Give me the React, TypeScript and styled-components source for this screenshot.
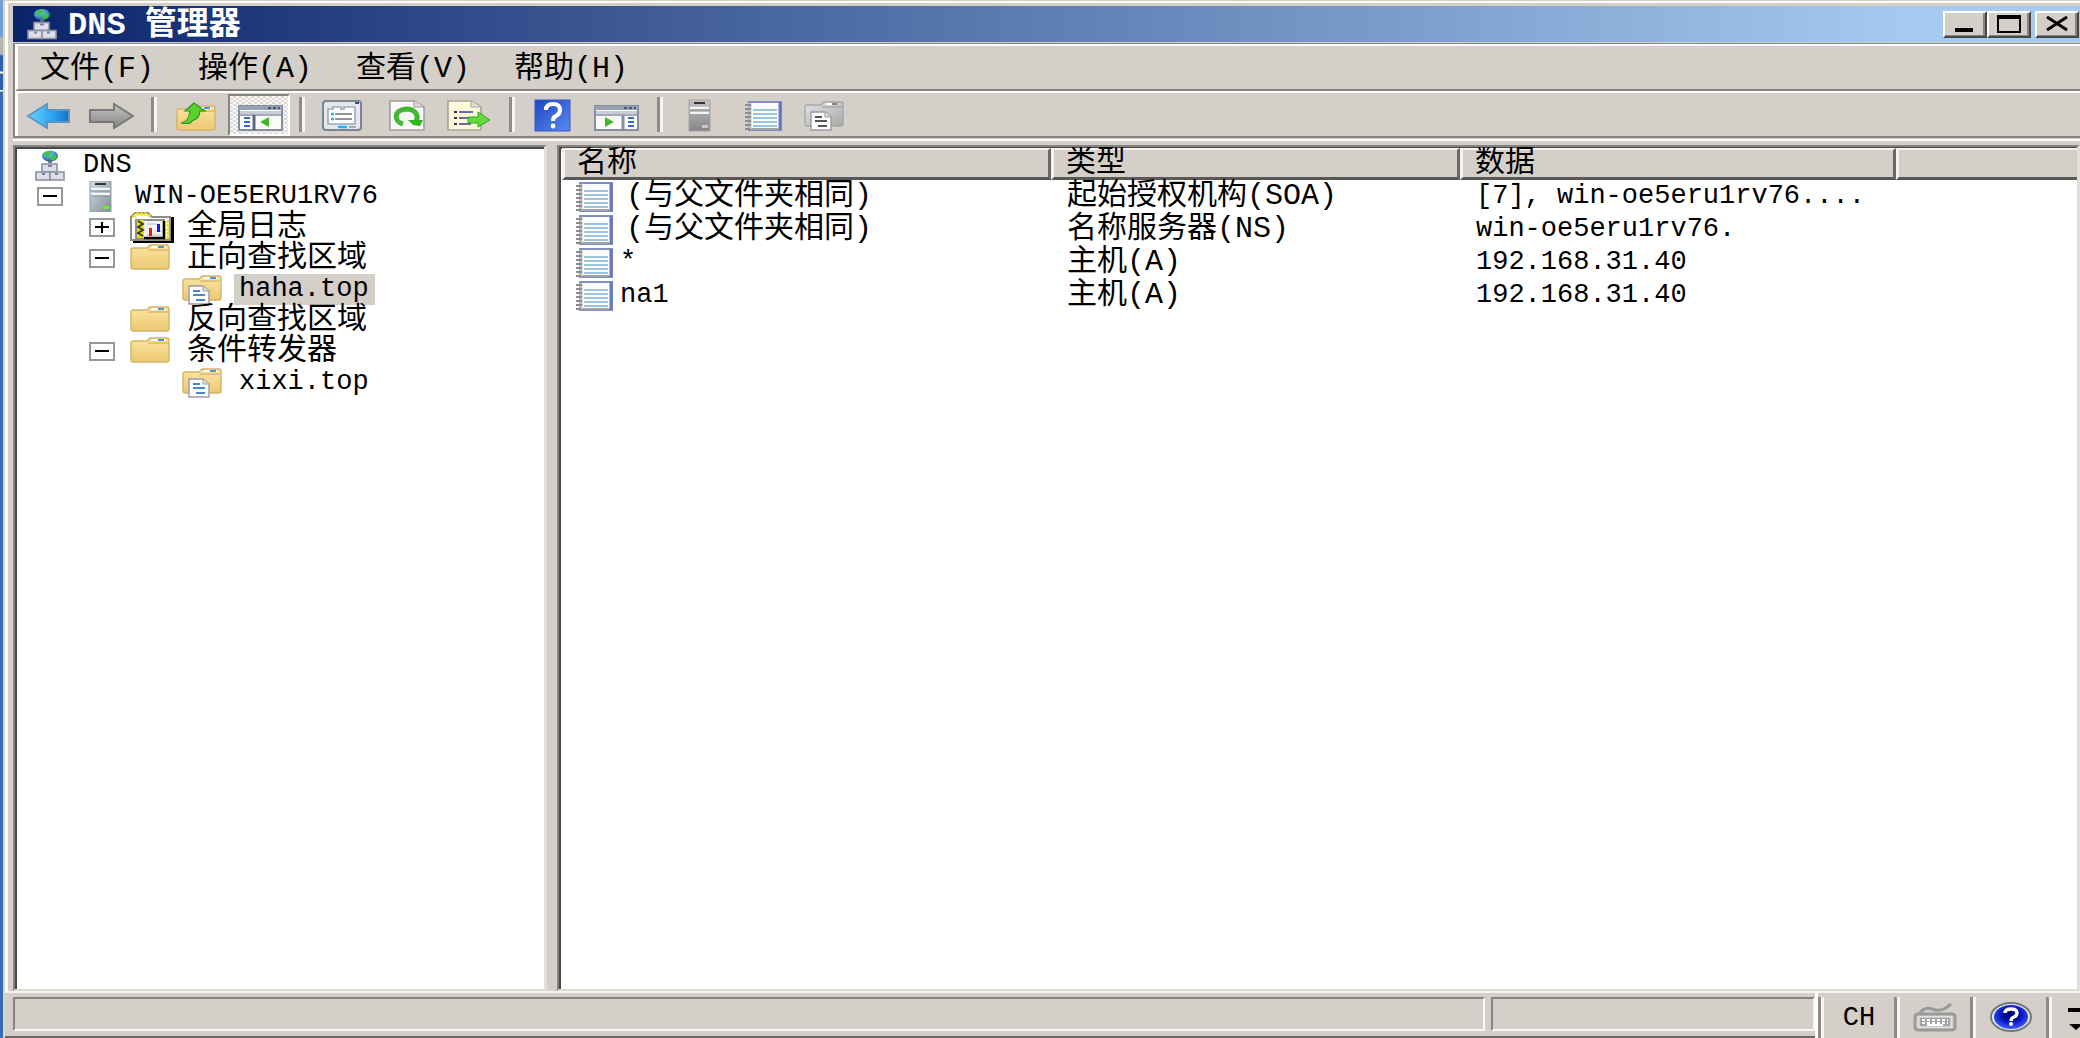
import React, { useState } from 'react';
import styled, { createGlobalStyle, css } from 'styled-components';

const face = '#d4cfc8';
const shade = '#868480';
const dark = '#484848';
const light = '#ffffff';
const font = '"Liberation Mono", "Noto Sans CJK SC", monospace';

const Global = createGlobalStyle`
  * { box-sizing: border-box; }
  body { margin: 0; overflow: hidden; background: ${face}; color: #000; font-family: ${font}; }
  button { font: inherit; color: inherit; border: 0; padding: 0; margin: 0; background: none; }
  svg { display: block; flex: none; }
`;

const Desktop = styled.div`
  display: flex;
  flex-direction: column;
  height: 100vh;
  padding-left: 3px;
  background: linear-gradient(#6fa0d8 0 36px, #b4b4b0 38px 54px, #2d62a8 56px 71px, #fff 72px 73px, #2d62a8 74px 90px, #fff 90px 91px, #3a6cae 92px);
`;

const Frame = styled.div`
  flex: 1;
  min-height: 0;
  display: flex;
  flex-direction: column;
  padding: 3px 0 0 5px;
  background: ${face};
  border-left: 2px solid #d8d4ca;
  border-top: 1px solid ${face};
  box-shadow: inset 3px 2px 0 #fbfbf8;
`;

const Inner = styled.div`
  flex: 1;
  min-height: 0;
  display: flex;
  flex-direction: column;
  padding-left: 3px;
`;

const TitleBar = styled.header`
  display: flex;
  align-items: center;
  flex: none;
  height: 38px;
  padding: 0 1px 0 13px;
  margin-bottom: 1px;
  background: linear-gradient(to right, #0a246a, #a6caf0 92%);
  border-top: 2px solid ${face};
`;

const Title = styled.h1`
  flex: 1;
  margin: 0 0 0 10px;
  padding-top: 4px;
  font-size: 32px;
  line-height: 32px;
  font-weight: 700;
  color: #fff;
`;

const WindowButton = styled.button<{ $apart?: boolean }>`
  display: flex;
  align-items: center;
  justify-content: center;
  width: 44px;
  height: 27px;
  margin-left: ${(p) => (p.$apart ? 4 : 0)}px;
  background: ${face};
  border: 2px solid;
  border-color: ${light} ${dark} ${dark} ${light};
  box-shadow: inset -2px -1px 0 ${shade};
`;

const Rebar = styled.div`
  flex: none;
  border: solid ${shade};
  border-width: 1px 0 2px 2px;
  margin-bottom: 1px;
`;

const Band = styled.div<{ $divided?: boolean }>`
  display: flex;
  align-items: center;
  height: ${(p) => (p.$divided ? 47 : 45)}px;
  border-top: 2px solid ${light};
  border-left: 3px solid ${light};
  ${(p) => p.$divided && css`border-bottom: 2px solid ${shade};`}
`;

const MenuItem = styled.button`
  padding: 3px 22px 0;
  font-size: 30px;
  line-height: 40px;
`;

const Tool = styled.button<{ $pressed?: boolean }>`
  display: flex;
  align-items: center;
  justify-content: center;
  width: 62px;
  height: 42px;
  ${(p) =>
    p.$pressed &&
    css`
      border: 2px solid;
      border-color: ${shade} ${light} ${light} ${shade};
      background: repeating-conic-gradient(#dedad5 0 25%, #f8f7f5 0 50%) 0 0 / 6px 4px;
    `}
`;

const Etch = styled.span<{ $tall?: boolean; $space: number }>`
  flex: none;
  width: 6px;
  height: ${(p) => (p.$tall ? '42px' : '35px')};
  margin: 0 ${(p) => p.$space}px;
  border-left: 3px solid #8e8c88;
  border-right: 3px solid #f6f5f2;
`;

const Panes = styled.main`
  flex: 1;
  min-height: 0;
  display: grid;
  grid-template-columns: 534px minmax(0, 1fr);
  gap: 10px;
  padding-top: 4px;
  border-top: 2px solid ${light};
`;

const Pane = styled.section`
  min-width: 0;
  background: #fff;
  border: solid;
  border-width: 2px 3px 2px 2px;
  border-color: ${shade} #e2dfd8 #dcdacf ${shade};
  box-shadow: inset 2px 2px 0 ${dark};
  padding: 1px 0 0 3px;
  overflow: hidden;
`;

const Tree = styled.ul`
  list-style: none;
  margin: 0;
  padding: 2px 0 0;
`;

const Node = styled.li<{ $level: number }>`
  display: flex;
  align-items: center;
  height: 31px;
  padding-left: ${(p) => Math.max(0, p.$level - 1) * 52 + 8}px;
`;

const Slot = styled.span`
  display: flex;
  width: 52px;
  flex: none;
`;

const Expander = styled.button`
  margin-left: 11px;
  width: 26px;
  height: 19px;
`;

const NodeLabel = styled.button<{ $selected?: boolean; $latin?: boolean }>`
  height: 31px;
  padding: 0 6px 0 5px;
  font-size: ${(p) => (p.$latin ? 27 : 30)}px;
  line-height: 31px;
  white-space: nowrap;
  background: ${(p) => (p.$selected ? face : 'transparent')};
`;

const Records = styled.table`
  width: 100%;
  table-layout: fixed;
  border-collapse: separate;
  border-spacing: 0;
`;

const Head = styled.th<{ $open?: boolean }>`
  height: 32px;
  padding: 0 0 0 12px;
  background: ${face};
  text-align: left;
  font-weight: 400;
  font-size: 30px;
  line-height: 27px;
  border-top: 2px solid #f4f3f0;
  border-left: 3px solid #f4f3f0;
  border-bottom: 3px solid #5a5855;
  border-right: ${(p) => (p.$open ? '0' : `3px solid #6a6864`)};
`;

const Cell = styled.td`
  height: 33px;
  padding: 0 0 0 16px;
  font-size: 30px;
  line-height: 33px;
  white-space: nowrap;
`;

const DataCell = styled(Cell)`
  font-size: 27px;
`;

const NameCell = styled(Cell)<{ $latin?: boolean }>`
  padding-left: 13px;
  font-size: ${(p) => (p.$latin ? 27 : 30)}px;
`;

const Name = styled.span<{ $latin?: boolean }>`
  display: flex;
  align-items: center;
  gap: ${(p) => (p.$latin ? 6 : 12)}px;
`;

const Footer = styled.footer`
  flex: none;
  display: flex;
  height: 47px;
  margin-left: -8px;
  border-top: 2px solid #f6f5f2;
`;

const Status = styled.div`
  flex: 1;
  display: grid;
  grid-template-columns: minmax(0, 1471fr) minmax(0, 324fr);
  gap: 6px;
  padding: 4px 0 5px 8px;
  background: ${face};
  border-bottom: 2px solid #6a6966;
`;

const StatusPanel = styled.div`
  border: 2px solid;
  border-color: ${shade} #f8f7f4 #f8f7f4 ${shade};
`;

const LanguageBar = styled.div`
  flex: none;
  display: flex;
  align-items: center;
  width: 265px;
  padding-top: 4px;
  background: ${face};
  border-left: 3px solid ${light};
  overflow: hidden;
`;

const LanguageButton = styled.button`
  display: flex;
  align-items: center;
  justify-content: center;
  flex: none;
  width: 70px;
  height: 40px;
  font-size: 27px;
`;

const MoreButton = styled(LanguageButton)`
  width: 31px;
  justify-content: flex-end;
`;

const Defs = () => (
  <svg width="0" height="0" aria-hidden="true" style={{ position: 'absolute' }}>
    <defs>
      <linearGradient id="gold" x1="0" y1="0" x2="0" y2="1">
        <stop offset="0" stopColor="#fbe6a0" />
        <stop offset="1" stopColor="#ecc873" />
      </linearGradient>
      <linearGradient id="silver" x1="0" y1="0" x2="1" y2="1">
        <stop offset="0" stopColor="#e4e4e4" />
        <stop offset="1" stopColor="#a8a8a8" />
      </linearGradient>
      <linearGradient id="steel" x1="0" y1="0" x2="1" y2="1">
        <stop offset="0" stopColor="#d4dce0" />
        <stop offset="1" stopColor="#7f8f98" />
      </linearGradient>
      <linearGradient id="iron" x1="0" y1="0" x2="0" y2="1">
        <stop offset="0" stopColor="#c4c4c4" />
        <stop offset="1" stopColor="#858585" />
      </linearGradient>
      <linearGradient id="azure" x1="0" y1="0" x2="1" y2="0">
        <stop offset="0" stopColor="#6fd0ff" />
        <stop offset="0.6" stopColor="#2aa4f0" />
        <stop offset="1" stopColor="#1672c0" />
      </linearGradient>
      <linearGradient id="royal" x1="0" y1="0" x2="1" y2="1">
        <stop offset="0" stopColor="#1c46c4" />
        <stop offset="1" stopColor="#5c8af0" />
      </linearGradient>
      <radialGradient id="globe" cx="0.4" cy="0.3" r="0.8">
        <stop offset="0" stopColor="#7fd8ff" />
        <stop offset="1" stopColor="#124c9c" />
      </radialGradient>
      <radialGradient id="orb" cx="0.5" cy="0.4" r="0.6">
        <stop offset="0" stopColor="#00006a" />
        <stop offset="0.5" stopColor="#0812b8" />
        <stop offset="1" stopColor="#3a5cff" />
      </radialGradient>
    </defs>
  </svg>
);

const DnsArt = () => (
  <g>
    <ellipse cx="24" cy="6" rx="8" ry="5.5" fill="url(#globe)" />
    <path d="M18 3l5-2 3 2-3 3-4 1zM25 6l5-1 1 3-4 3-3-2z" fill="#3cc43c" />
    <path d="M22 11h4v2h-4z" fill="#777" />
    <g fill="#dcdee8" stroke="#9092a0" strokeWidth="1.6">
      <rect x="16" y="14" width="15" height="8" />
      <rect x="10" y="22" width="14" height="8" />
      <rect x="24" y="22" width="14" height="8" />
    </g>
    <path d="M22 16h4M16 24h3M29 24h3" stroke="#7a80a0" strokeWidth="2" />
  </g>
);

const ServerArt = ({ gray }: { gray?: boolean }) => (
  <g>
    <path d="M12 0h21v31H12z" fill={gray ? 'url(#iron)' : 'url(#steel)'} stroke={gray ? '#a4a4a4' : '#93a2aa'} />
    <path d="M17 3h11" stroke="#333" strokeWidth="2" />
    <path d="M13 8h19M13 13h19" stroke="#f2f4f5" strokeWidth="2.4" />
    <path d="M13 10h19M13 15h19" stroke="#8c9498" strokeWidth="1" />
    <path d="M25 25h6v3h-6z" fill={gray ? '#c8c8c8' : '#6ff020'} />
  </g>
);

const FolderArt = ({ gray, page }: { gray?: boolean; page?: boolean }) => (
  <g>
    <path
      d="M1 6q0-2 2-2h14l3-3h17q2 0 2 2v20q0 2-2 2H3q-2 0-2-2z"
      fill={gray ? 'url(#silver)' : 'url(#gold)'}
      stroke={gray ? '#a8a8a8' : '#d4b468'}
      strokeWidth="1.4"
    />
    <path d="M18 6h20" stroke={gray ? '#aaa' : '#dcb868'} strokeWidth="1.4" />
    <path d="M22 3h13" stroke="#fff" strokeWidth="2" />
    <path d="M28 3h6" stroke={gray ? '#888' : '#4c94d8'} strokeWidth="2" />
    {page && (
      <>
        <path d="M7 11h14l6 5v13H7z" fill="#fff" stroke="#9a9ca0" strokeWidth="1.4" />
        <path d="M21 11v5h6" fill="#ddd" stroke="#9a9ca0" />
        <path d="M11 16h7M11 20h12M14 25h9" stroke={gray ? '#555' : '#4488d0'} strokeWidth="2" />
      </>
    )}
  </g>
);

const LogArt = () => (
  <g>
    <path d="M3 31h41V5h-3v22H3z" fill="#000" />
    <path d="M1 28V5l4-4h13l4 4h18v23z" fill="#fff" stroke="#8c8c8c" strokeWidth="2" />
    <path d="M3 5l4-3h10l4 3M38 8v19" fill="none" stroke="#f0e020" strokeWidth="3" strokeDasharray="3 1" />
    <path d="M6 8h28v18H6z" fill="#f4f4f4" stroke="#909090" strokeWidth="2" />
    <path d="M34 9v17H14" fill="none" stroke="#000" strokeWidth="2.6" />
    <path d="M7 8h7v18H7z" fill="#e8e000" />
    <path d="M8 9l5 3-5 3 5 3-5 3 5 3" fill="none" stroke="#333" strokeWidth="1.8" />
    <path d="M17 12h10M17 23h14M26 19h6" stroke="#bbb" />
    <path d="M19 16h3v8h-3z" fill="#f01818" />
    <path d="M27 12h3v8h-3z" fill="#1818f0" />
  </g>
);

const NotebookArt = () => (
  <g>
    <path d="M5 1h32v28H5z" fill="#fdfdfd" stroke="#8090c4" strokeWidth="2" />
    <path d="M36 1v28" stroke="#6478bc" strokeWidth="3" />
    <path d="M6 28h28" stroke="#a4a4a4" strokeWidth="2" />
    <path d="M6 2v26" stroke="#c4c4c4" strokeWidth="3" />
    <path d="M9 9h24M9 13h24M9 17h24M9 21h24M9 25h24" stroke="#9cc4dc" strokeWidth="2" />
    <path d="M1 4h6M1 8h6M1 12h6M1 16h6M1 20h6M1 24h6M1 28h5" stroke="#8c8c8c" strokeWidth="1.8" />
  </g>
);

const WindowArt = ({ mirrored }: { mirrored?: boolean }) => (
  <g>
    <path d="M1 1h43v24H1z" fill="#fbfbfb" stroke="#8490a0" strokeWidth="2" />
    <path d="M1 1h43v4H1z" fill="#98a2b2" />
    <path d="M2 6h41v3H2z" fill="#c8ced8" />
    <path d="M30 3h3M35 3h3M40 3h2" stroke="#4a5468" strokeWidth="2" />
    <path d="M1 10h43" stroke="#8490a0" strokeWidth="1.6" />
    {mirrored ? (
      <>
        <path d="M29 10v15" stroke="#8490a0" strokeWidth="3" />
        <path d="M34 13h6M34 17h6M34 21h6" stroke="#3a6cc0" strokeWidth="2" />
        <path d="M11 12v10l9-5z" fill="#42b828" />
      </>
    ) : (
      <>
        <path d="M16 10v15" stroke="#5a6884" strokeWidth="3" />
        <path d="M6 13h6M6 17h6M6 21h6" stroke="#3a6cc0" strokeWidth="2" />
        <path d="M31 12v10l-9-5z" fill="#42b828" />
      </>
    )}
  </g>
);

const toolArt: Record<string, React.ReactNode> = {
  back: <path d="M3 18L22 6v6h22v12H22v6z" fill="url(#azure)" stroke="#5a98c4" strokeWidth="2" />,
  forward: <path d="M46 18L27 6v6H3v12h24v6z" fill="url(#iron)" stroke="#787878" strokeWidth="2" />,
  up: (
    <>
      <g transform="translate(3 7)"><FolderArt /></g>
      <path d="M8 25c6-1 8-5 9-12h-5l9-8 11 8h-5c-1 9-5 8-8 10-1 3-5 3-11 2z" fill="#5cd030" stroke="#2c9420" strokeWidth="1.2" />
    </>
  ),
  tree: <g transform="translate(3 7)"><WindowArt /></g>,
  properties: (
    <>
      <rect x="2" y="3" width="38" height="29" rx="3" fill="#e4e8ee" stroke="#7c8494" strokeWidth="2" />
      <path d="M34 5h4" stroke="#3c4c7c" strokeWidth="2" />
      <path d="M7 11h5V9h8v2h3V9h11v17H7z" fill="#fff" stroke="#a0a6b8" strokeWidth="1.6" />
      <path d="M14 16h17M14 21h17" stroke="#949494" strokeWidth="1.8" />
      <path d="M10 16h3M10 21h3M17 29h9" stroke="#18b8ec" strokeWidth="2.4" />
      <path d="M28 29h7" stroke="#aaa" strokeWidth="2" />
    </>
  ),
  refresh: (
    <>
      <path d="M7 3h24l10 6v23H7z" fill="#fafafa" stroke="#a0a0a0" strokeWidth="1.6" />
      <path d="M31 3v6h10" fill="#ddd" stroke="#989898" />
      <path d="M20 26c-10-3-9-14 3-15 10 0 13 7 10 12" fill="none" stroke="#44b834" strokeWidth="5" />
      <path d="M25 22h15l-3 6-7-1z" fill="#30b420" />
    </>
  ),
  export: (
    <>
      <path d="M3 3h23l10 6v23H3z" fill="#fdf7dc" stroke="#aaa494" strokeWidth="1.6" />
      <path d="M26 3v6h10" fill="#ddd" stroke="#aaa494" />
      <path d="M9 14h3M9 20h3M9 26h3" stroke="#333" strokeWidth="2" />
      <path d="M14 14h14M14 20h10M14 26h12" stroke="#7468a0" strokeWidth="2" />
      <path d="M23 19h10v-5l12 8-12 7v-4H23z" fill="#64d83c" stroke="#38a424" />
    </>
  ),
  help: (
    <>
      <rect x="4" y="2" width="35" height="31" fill="url(#royal)" stroke="#3a58b8" />
      <path d="M15 12q0-6 7-6t7 6q0 4-4 6-3 1-3 5" fill="none" stroke="#fff" strokeWidth="4" />
      <circle cx="22" cy="28" r="2.4" fill="#fff" />
    </>
  ),
  action: <g transform="translate(1 7)"><WindowArt mirrored /></g>,
  server: <g transform="translate(-2 2)"><ServerArt gray /></g>,
  record: <g transform="translate(3 3)"><NotebookArt /></g>,
  zone: <g transform="translate(1 3)"><FolderArt gray page /></g>,
};

const tools: [string, string][] = [
  ['back', '后退'],
  ['forward', '前进'],
  ['-', ''],
  ['up', '向上'],
  ['tree', '显示控制台树'],
  ['-', ''],
  ['properties', '属性'],
  ['refresh', '刷新'],
  ['export', '导出列表'],
  ['-', ''],
  ['help', '帮助'],
  ['action', '显示操作窗格'],
  ['-', ''],
  ['server', '新建服务器'],
  ['record', '新建记录'],
  ['zone', '新建区域'],
];

type Item = { id: string; parents: string[]; level: number; label: string; art: React.ReactNode; expandable?: boolean; latin?: boolean; top?: number };

const items: Item[] = [
  { id: 'dns', parents: [], level: 0, label: 'DNS', art: <DnsArt />, latin: true },
  { id: 'host', parents: [], level: 1, label: 'WIN-OE5ERU1RV76', art: <ServerArt />, expandable: true, latin: true },
  { id: 'log', parents: ['host'], level: 2, label: '全局日志', art: <LogArt />, expandable: true },
  { id: 'fwd', parents: ['host'], level: 2, label: '正向查找区域', art: <FolderArt />, expandable: true, top: 1 },
  { id: 'haha', parents: ['host', 'fwd'], level: 3, label: 'haha.top', art: <FolderArt page />, latin: true, top: 1 },
  { id: 'rev', parents: ['host'], level: 2, label: '反向查找区域', art: <FolderArt />, top: 1 },
  { id: 'cond', parents: ['host'], level: 2, label: '条件转发器', art: <FolderArt />, expandable: true, top: 1 },
  { id: 'xixi', parents: ['host', 'cond'], level: 3, label: 'xixi.top', art: <FolderArt page />, latin: true, top: 1 },
];

const records = [
  { name: '(与父文件夹相同)', type: '起始授权机构(SOA)', data: '[7], win-oe5eru1rv76....' },
  { name: '(与父文件夹相同)', type: '名称服务器(NS)', data: 'win-oe5eru1rv76.' },
  { name: '*', type: '主机(A)', data: '192.168.31.40', latin: true },
  { name: 'na1', type: '主机(A)', data: '192.168.31.40', latin: true },
];

export default function App() {
  const [open, setOpen] = useState<string[]>(['host', 'fwd', 'cond']);
  const [selected, setSelected] = useState('haha');
  const toggle = (id: string) => setOpen((o) => (o.includes(id) ? o.filter((x) => x !== id) : [...o, id]));

  return (
    <Desktop>
      <Global />
      <Defs />
      <Frame>
        <Inner>
          <TitleBar>
            <svg width="32" height="32" viewBox="8 0 32 31"><DnsArt /></svg>
            <Title>DNS 管理器</Title>
            <WindowButton aria-label="最小化">
              <svg width="30" height="18"><path d="M5 15h18" stroke="#000" strokeWidth="4" /></svg>
            </WindowButton>
            <WindowButton aria-label="最大化">
              <svg width="30" height="20"><path d="M4 3h22v15H4z" fill="none" stroke="#000" strokeWidth="2" /><path d="M3 3h24" stroke="#000" strokeWidth="4" /></svg>
            </WindowButton>
            <WindowButton aria-label="关闭" $apart>
              <svg width="26" height="18"><path d="M3 2l20 13M23 2L3 15" stroke="#000" strokeWidth="3" /></svg>
            </WindowButton>
          </TitleBar>
          <Rebar>
            <Band as="nav" $divided>
              {['文件(F)', '操作(A)', '查看(V)', '帮助(H)'].map((m) => (
                <MenuItem key={m}>{m}</MenuItem>
              ))}
            </Band>
            <Band role="toolbar">
              {tools.map(([id, label], i) =>
                id === '-' ? (
                  <Etch key={i} $space={9} />
                ) : (
                  <Tool key={id} aria-label={label} $pressed={id === 'tree'}>
                    <svg width="48" height="34" viewBox="0 0 48 34">{toolArt[id]}</svg>
                  </Tool>
                ),
              )}
            </Band>
          </Rebar>
          <Panes>
            <Pane>
              <Tree role="tree">
                {items
                  .filter((n) => n.parents.every((p) => open.includes(p)))
                  .map((n) => (
                    <Node key={n.id} $level={n.level} role="treeitem">
                      {n.level > 0 && (
                        <Slot>
                          {n.expandable && (
                            <Expander aria-label={n.label} onClick={() => toggle(n.id)}>
                              <svg width="26" height="19">
                                <path d="M1 1h24v17H1z" fill="#fff" stroke="#989898" strokeWidth="2" />
                                <path d={open.includes(n.id) ? 'M6 9h14' : 'M6 9h14M13 4v11'} stroke="#000" strokeWidth="2" />
                              </svg>
                            </Expander>
                          )}
                        </Slot>
                      )}
                      <Slot>
                        <svg width="45" height="31" viewBox={`0 ${-(n.top ?? 0)} 45 31`}>{n.art}</svg>
                      </Slot>
                      <NodeLabel $latin={n.latin} $selected={selected === n.id} onClick={() => setSelected(n.id)}>
                        {n.label}
                      </NodeLabel>
                    </Node>
                  ))}
              </Tree>
            </Pane>
            <Pane>
              <Records>
                <colgroup>
                  <col width="489" />
                  <col width="409" />
                  <col width="436" />
                  <col />
                </colgroup>
                <thead>
                  <tr>
                    <Head>名称</Head>
                    <Head>类型</Head>
                    <Head>数据</Head>
                    <Head $open />
                  </tr>
                </thead>
                <tbody>
                  {records.map((r, i) => (
                    <tr key={i}>
                      <NameCell $latin={r.latin}>
                        <Name $latin={r.latin}>
                          <svg width="39" height="30"><NotebookArt /></svg>
                          {r.name}
                        </Name>
                      </NameCell>
                      <Cell>{r.type}</Cell>
                      <DataCell>{r.data}</DataCell>
                      <Cell />
                    </tr>
                  ))}
                </tbody>
              </Records>
            </Pane>
          </Panes>
          <Footer>
            <Status>
              <StatusPanel />
              <StatusPanel />
            </Status>
            <LanguageBar>
              <Etch $tall $space={0} />
              <LanguageButton>CH</LanguageButton>
              <Etch $tall $space={0} />
              <LanguageButton aria-label="键盘">
                <svg width="44" height="30" viewBox="0 0 44 30" fill="none" stroke="#999">
                  <path d="M6 11q6-8 13-5t14-1l5-4" strokeWidth="3" />
                  <rect x="2" y="11" width="40" height="16" rx="3" strokeWidth="3" />
                  <rect x="6" y="14" width="32" height="10" fill="#a4a4a4" stroke="#f4f4f4" strokeWidth="1" />
                  <path d="M9 17h26M9 20h26" stroke="#fff" strokeWidth="2" strokeDasharray="3 2" />
                  <path d="M14 22h16" stroke="#fff" strokeWidth="2" />
                </svg>
              </LanguageButton>
              <Etch $tall $space={0} />
              <LanguageButton aria-label="帮助">
                <svg width="42" height="31" viewBox="0 0 42 31">
                  <ellipse cx="21" cy="15" rx="20" ry="14" fill="#e4e8f4" stroke="#75777c" strokeWidth="2" />
                  <ellipse cx="21" cy="15" rx="17" ry="12" fill="url(#orb)" />
                  <path d="M15 11q0-4 6-4t6 4q0 3-3 4-3 1-3 4" fill="none" stroke="#fff" strokeWidth="3.4" />
                  <circle cx="21" cy="22" r="2" fill="#fff" />
                </svg>
              </LanguageButton>
              <Etch $tall $space={0} />
              <MoreButton aria-label="更多">
                <svg width="15" height="26" viewBox="0 0 15 26"><path d="M0 3h15v4H0zM1 19h14l-7 6z" fill="#000" /></svg>
              </MoreButton>
            </LanguageBar>
          </Footer>
        </Inner>
      </Frame>
    </Desktop>
  );
}
